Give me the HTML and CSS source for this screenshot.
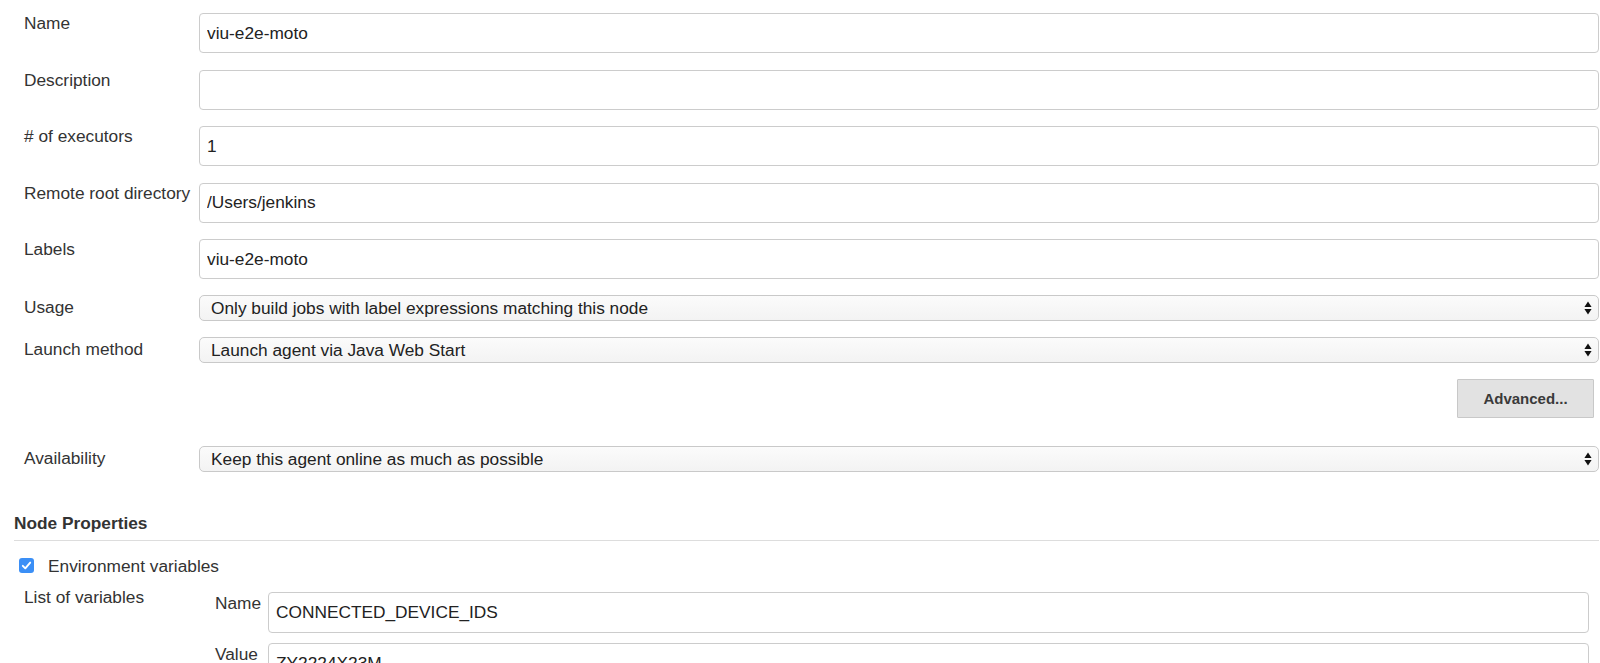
FILE: index.html
```html
<!DOCTYPE html>
<html>
<head>
<meta charset="utf-8">
<title>Node configuration</title>
<link rel="stylesheet" href="styles.css">
</head>
<body>
<div class="page">
  <div class="row text first">
    <div class="label">Name</div>
    <input class="text-input" type="text" value="viu-e2e-moto">
  </div>
  <div class="row text">
    <div class="label">Description</div>
    <input class="text-input" type="text" value="">
  </div>
  <div class="row text">
    <div class="label"># of executors</div>
    <input class="text-input" type="text" value="1">
  </div>
  <div class="row text">
    <div class="label">Remote root directory</div>
    <input class="text-input" type="text" value="/Users/jenkins">
  </div>
  <div class="row text">
    <div class="label">Labels</div>
    <input class="text-input" type="text" value="viu-e2e-moto">
  </div>
  <div class="row sel usage">
    <div class="label">Usage</div>
    <div class="select"><span class="sel-text">Only build jobs with label expressions matching this node</span><svg class="arrows" width="8" height="14" viewBox="0 0 8 14"><path d="M4 0.5 L7.6 6 H0.4 Z M4 13.5 L7.6 8 H0.4 Z" fill="#111"/></svg></div>
  </div>
  <div class="row sel launch">
    <div class="label">Launch method</div>
    <div class="select"><span class="sel-text">Launch agent via Java Web Start</span><svg class="arrows" width="8" height="14" viewBox="0 0 8 14"><path d="M4 0.5 L7.6 6 H0.4 Z M4 13.5 L7.6 8 H0.4 Z" fill="#111"/></svg></div>
  </div>
  <div class="adv-row">
    <button class="adv-btn" type="button">Advanced...</button>
  </div>
  <div class="row sel avail">
    <div class="label">Availability</div>
    <div class="select"><span class="sel-text">Keep this agent online as much as possible</span><svg class="arrows" width="8" height="14" viewBox="0 0 8 14"><path d="M4 0.5 L7.6 6 H0.4 Z M4 13.5 L7.6 8 H0.4 Z" fill="#111"/></svg></div>
  </div>

  <div class="section-title">Node Properties</div>
  <div class="section-rule"></div>

  <div class="check-row">
    <span class="checkbox"><svg width="15" height="15" viewBox="0 0 15 15"><path d="M3.8 7.8 L6.3 10.3 L11.2 4.6" fill="none" stroke="#fff" stroke-width="1.9" stroke-linecap="round" stroke-linejoin="round"/></svg></span>
    <span class="check-label">Environment variables</span>
  </div>

  <div class="vars-row">
    <div class="label">List of variables</div>
    <div class="vars">
      <div class="var-label">Name</div>
      <input class="text-input var-input" type="text" value="CONNECTED_DEVICE_IDS">
      <div class="var-label">Value</div>
      <input class="text-input var-input" type="text" value="ZY2224X23M">
    </div>
  </div>
</div>
</body>
</html>
```

FILE: styles.css
```css
html, body {
  margin: 0;
  padding: 0;
  background: #ffffff;
}

body {
  font-family: "Liberation Sans", Arial, Helvetica, sans-serif;
  font-size: 17.3px;
  color: #333333;
  overflow: hidden;
}

.page {
  padding: 13px 1px 0 14px;
  display: flex;
  flex-direction: column;
}

.row {
  display: grid;
  grid-template-columns: 175px 1fr;
  padding-left: 10px;
  align-items: start;
}

.row.text { margin-top: 16.6px; }
.row.text.first { margin-top: 0; }
.row.usage { margin-top: 15.6px; }
.row.launch { margin-top: 16px; }
.row.avail { margin-top: 28px; }

.label {
  line-height: 20px;
  color: #333333;
  white-space: nowrap;
}

.row.sel .label { padding-top: 2px; }

.text-input {
  box-sizing: border-box;
  width: 100%;
  height: 40px;
  margin: 0;
  border: 1px solid #cccccc;
  border-radius: 4px;
  padding: 0 7px;
  font-family: inherit;
  font-size: 17.3px;
  color: #222222;
  background: #ffffff;
  outline: none;
}

.select {
  box-sizing: border-box;
  height: 26px;
  border: 1px solid #c9c9c9;
  border-radius: 5px;
  background: linear-gradient(#fbfbfb, #f3f3f3);
  display: flex;
  align-items: center;
  padding: 0 5px 0 11px;
  color: #222222;
  line-height: 20px;
}

.sel-text {
  flex: 1;
  white-space: nowrap;
}

.arrows {
  display: block;
  margin-right: 1px;
}

.adv-row {
  margin-top: 16px;
  display: flex;
  justify-content: flex-end;
  padding-right: 5px;
}

.adv-btn {
  box-sizing: border-box;
  width: 137px;
  height: 39px;
  margin: 0;
  border: 1px solid #c8c8c8;
  border-radius: 1px;
  background: #e2e2e2;
  font-family: "Liberation Sans", Arial, Helvetica, sans-serif;
  font-size: 15px;
  font-weight: bold;
  color: #3a3a3a;
  padding: 0;
}

.section-title {
  margin-top: 41px;
  font-weight: bold;
  line-height: 20px;
  color: #333333;
}

.section-rule {
  margin-top: 7px;
  height: 1px;
  background: #dddddd;
}

.check-row {
  margin-top: 15px;
  padding-left: 5px;
  display: flex;
  align-items: center;
  line-height: 20px;
}

.checkbox {
  width: 15px;
  height: 15px;
  border-radius: 3px;
  background: #3b8ff6;
  display: block;
}

.checkbox svg { display: block; }

.check-label {
  margin-left: 14px;
  color: #333333;
}

.vars-row {
  margin-top: 11px;
  display: grid;
  grid-template-columns: 175px 1fr;
  padding-left: 10px;
  align-items: start;
}

.vars {
  margin-top: 5px;
  padding-left: 16px;
  padding-right: 10px;
  display: grid;
  grid-template-columns: 53px 1fr;
  row-gap: 10px;
  align-items: start;
}

.var-label {
  line-height: 20px;
  padding-top: 1px;
  color: #333333;
}

.var-input {
  height: 41px;
}
```
